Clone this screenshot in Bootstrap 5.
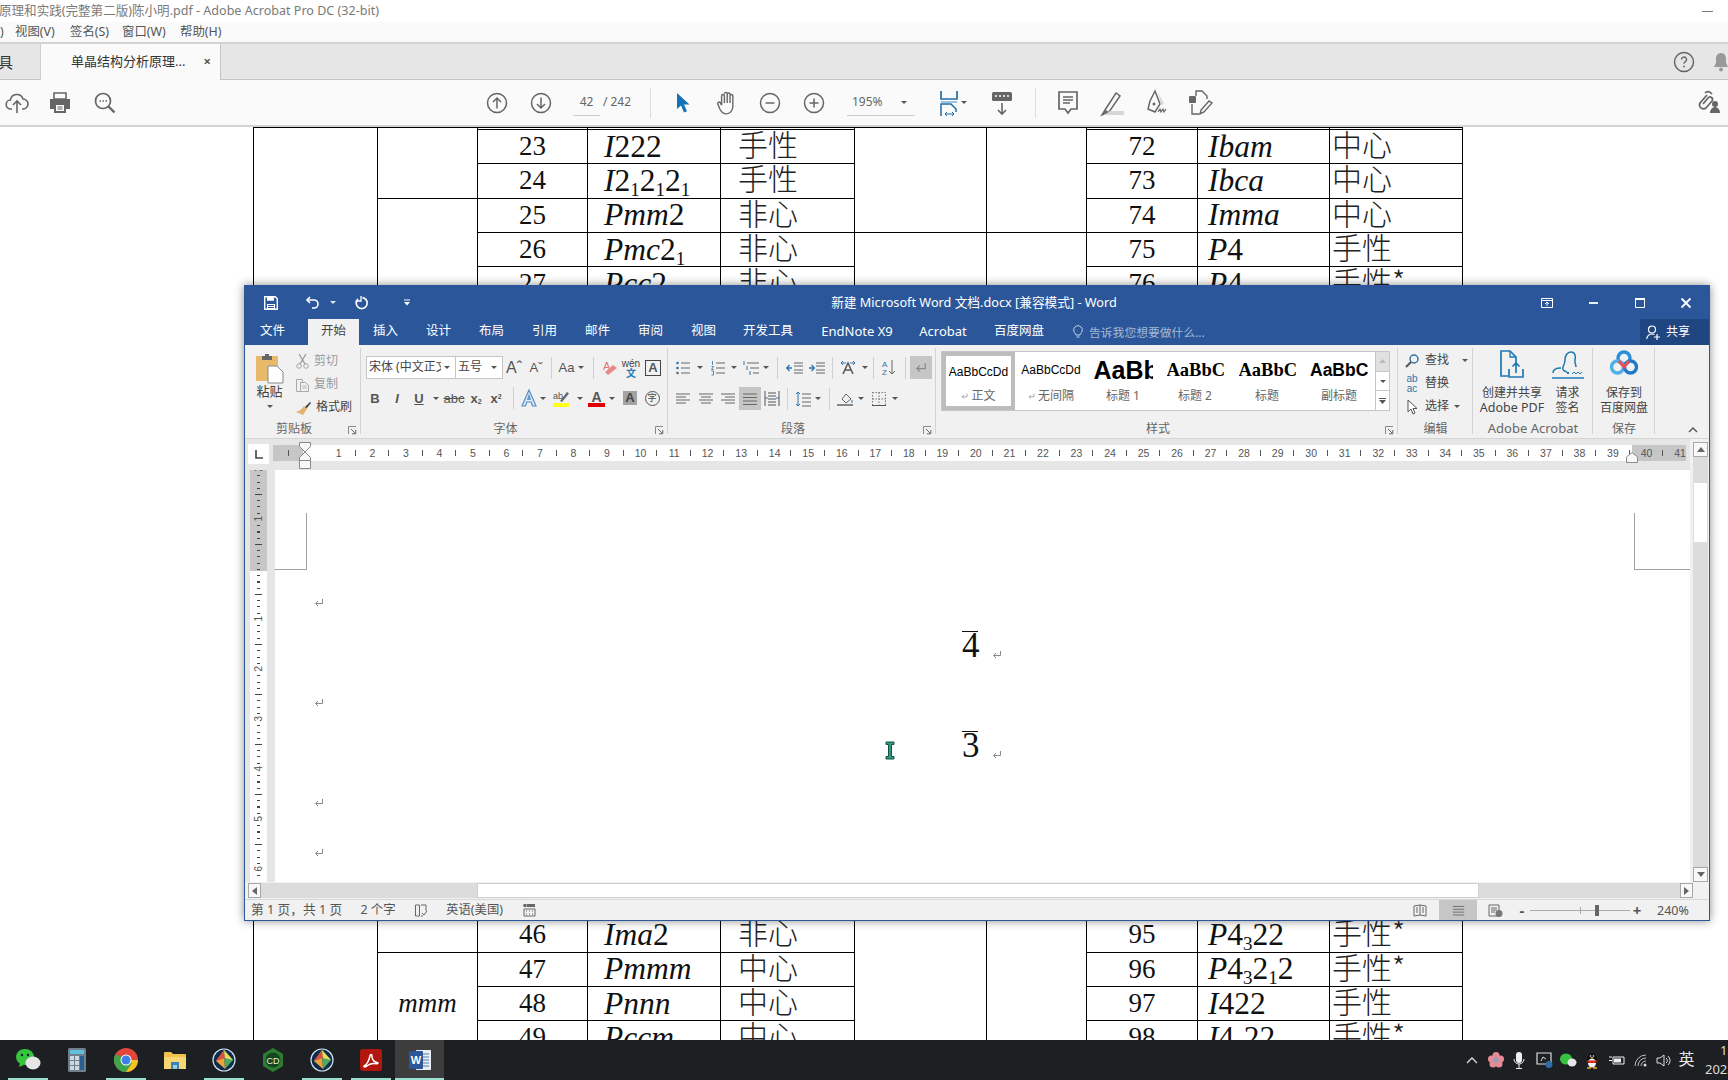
<!DOCTYPE html>
<html lang="zh-CN">
<head>
<meta charset="utf-8">
<title>Word over Acrobat</title>
<link href="https://cdn.jsdelivr.net/npm/bootstrap@5.3.0/dist/css/bootstrap.min.css" rel="stylesheet">
<style>
html,body{margin:0;height:100%}
body{width:1728px;height:1080px;overflow:hidden;position:relative;background:#fff;font-family:"Noto Sans","Noto Sans CJK SC",sans-serif;font-size:12px;color:#444;line-height:1.2}
svg{flex:none;display:block;overflow:visible}
.ui{display:grid;align-items:center;justify-items:center}
.ui>*{white-space:nowrap}
.je{justify-self:end}
.js{justify-self:start}
/* Acrobat */
.ac-title{height:22px;font-size:12.55px;color:#7a7a7a;white-space:nowrap;justify-content:space-between}
.ac-title b{font-weight:400;margin-left:-1px}
.ac-min{width:11px;height:1px;background:#777;margin-right:15px}
.ac-menu{height:22px;background:#fafafa;border-bottom:2px solid #d2d2d2;font-size:12.4px;color:#555;padding-top:1px;grid-template-columns:15px 55px 52px 58px 50px 1fr;justify-items:start}
.ac-tabs{height:36px;background:#e6e6e6;border-bottom:1px solid #c4c4c4;font-size:13px}
.ac-tab0{width:41px;height:35px;border-right:1px solid #cfcfcf;font-size:15px;color:#333;justify-content:flex-end;padding-right:27px;overflow:hidden}
.ac-tab{width:180px;height:36px;background:#fafafa;border-right:1px solid #c4c4c4;margin-bottom:-1px;padding-left:30px;justify-content:space-between;padding-right:9px;color:#333}
.ac-tab strong{font-size:13px;color:#555}
.bell{margin-right:-3px}
.ac-bar{height:47px;background:#fafafa;border-bottom:2px solid #d4d4d4;grid-template-columns:34px 51px 40px 352px 40px 48px 8px 27px 34px 32px 34px 54px 32px 56px 5px 68px 43px 12px 64px 2px 64px 24px 64px 24px 478px 36px;font-size:12px;color:#666}
.pg-in{width:27px;height:26px;border-bottom:1px solid #ccc;justify-content:center}
.zm-in{width:68px;height:26px;border-bottom:1px solid #ccc;padding:0 8px 0 5px;justify-content:space-between}
.vs{width:1px;height:30px;background:#ddd}
.doc-pdf{flex:1 1 0;overflow:hidden;background:#fff}
.pdf-tb{border-collapse:collapse;table-layout:fixed;width:1210px;margin-left:253px;color:#111;font-family:"Liberation Serif",serif}
.pdf-tb td{border:1.4px solid #000;padding:0;font-size:27px;line-height:1;white-space:nowrap;text-align:center;height:34.27px}
.pdf-tb td.sg{text-align:left;padding-left:16px;font-size:31.5px}
.pdf-tb td.sg2{text-align:left;padding-left:10px;font-size:31.5px}
.pdf-tb td.ty,.pdf-tb td.ty2{text-align:left;font-family:"Noto Sans CJK SC",sans-serif;font-weight:300;font-size:30px;line-height:27px;padding-bottom:6px;color:#222}
.pdf-tb td.ty{padding-left:17px}
.pdf-tb td.ty2{padding-left:2px}
.pdf-tb tr.r0 td{height:2px}
.pdf-tb tr.rs td{height:617px}
.pdf-tb td.an{vertical-align:middle;text-align:center;font-style:italic}
.sb{font-size:19px;vertical-align:-5px;font-style:normal;line-height:0}
.c1{width:124px}.c2{width:100px}.c3{width:110px}.c4{width:133px}.c5{width:134px}.c6{width:132px}.c7{width:100px}.c8{width:111px}.c9{width:132px}.c10{width:133px}
/* taskbar */
.task{height:40px;background:#1c2023;padding-left:3px;flex:none}
.tk{width:49px;height:40px;justify-content:center}
.tk.on{background:linear-gradient(#9be0cf,#9be0cf) center bottom/40px 2px no-repeat}
.tk.act{background:linear-gradient(#9be0cf,#9be0cf) center bottom/100% 2px no-repeat #3d3d3d}
.tray{margin-left:auto;grid-template-columns:24px 24px 22px 28px 20px 27px 23px 25px 20px 27px 28px;height:40px;color:#e6e6e6}
.tray .ime{font-size:16px}
.clk{font-size:13px;line-height:19px;justify-self:start;color:#ddd;width:70px}
.clk div:first-child{padding-left:20px}
.clk div:last-child{padding-left:5px}
/* Word */
.wd{position:absolute;left:244px;top:285px;width:1466px;height:636px;border:1px solid #2b579a;background:#f1f1f1;box-shadow:0 0 9px rgba(0,0,0,.45);display:flex;flex-direction:column;overflow:hidden}
.wd-top{height:33px;background:#2b579a;color:#fff;grid-template-columns:52px 32px 8px 48px 44px 1fr 44px 48px 46px 46px;flex:none;font-size:13px}
.cr.cr-w{border-top-color:#dfe7f2}
.wd-title{font-size:12.7px;color:#fff;padding-right:6px}
.wd-tabs{height:26px;background:#2b579a;color:#fff;flex:none;font-size:12.5px;grid-template-columns:55px 8px 51px repeat(7,53px) 76px 102px 70px 82px 1fr 69px}
.wd-tabs>div{height:26px;line-height:24px;text-align:center;width:100%}
.wd-tabs .on{background:#f1f1f1;color:#444}
.wd-tabs .la{font-size:13px}
.tellme{justify-self:start;display:flex;align-items:center;gap:6px;color:#a3b8d6;font-size:11.8px;padding-left:13px;width:auto!important}
.share{background:#1f4681;display:flex;align-items:center;justify-content:flex-start;padding-left:6px;gap:5px;font-size:12px}
.rib{height:94px;flex:none;background:#f1f1f1;border-bottom:1px solid #d5d5d5;display:flex}
.gr{position:relative;flex:none;display:flex;flex-direction:column}
.gr::after{content:"";position:absolute;right:0;top:3px;bottom:4px;width:1px;background:#d3d3d3}
.gr-body{height:75px;flex:none}
.gr-lab{text-align:center;color:#666;font-size:12px;line-height:17px}
.lb-c{padding-right:18px}
.lb-a{font-size:13px}
.dl{position:absolute;right:4px;bottom:3px}
.g-clip{width:116px}.g-font{width:307px}.g-para{width:268px}.g-sty{width:462px}.g-edit{width:75px}.g-acro{width:120px}.g-save{width:62px}
.g-end{flex:1 1 auto}
.g-end::after{display:none}
.clip-b{display:grid;grid-template-columns:49px 1fr;padding-top:8px}
.paste{display:flex;flex-direction:column;align-items:center;gap:1px;font-size:13px}
.cl-rows{display:flex;flex-direction:column;padding-left:2px;margin-top:-3px}
.cl-r{height:23px;display:flex;align-items:center;gap:5px;color:#9a9a9a}
.cl-r.act{color:#444}
.cr{display:block;width:0;height:0;border-left:3px solid transparent;border-right:3px solid transparent;border-top:3.5px solid #555}
.sp{width:1px;height:22px;background:#d0d0d0}
.rw{height:22px}
.f1{margin-top:11px;grid-template-columns:5px 90px 47px 22px 22px 9px 21px 8px 16px 18px 24px 20px}
.f2{margin-top:9px;grid-template-columns:3px 22px 22px 22px 12px 24px 20px 20px 14px 18px 10px 27px 9px 24px 8px 28px 16px}
.p1{margin-top:11px;grid-template-columns:4px 22px 12px 24px 8px 26px 4px 18px 16px 28px 4px 27px 7px 10px 22px 10px 22px}
.p2{margin-top:9px;grid-template-columns:4px 22px 24px 20px 23px 22px 8px 24px 6px 16px 16px 16px 20px 12px}
.combo{height:23px;width:100%;background:#fff;border:1px solid #c6c6c6;display:flex;align-items:center;justify-content:space-between;gap:3px;padding:0 5px 0 2px;font-size:12px;color:#444;overflow:hidden}
.combo span{flex:1 1 0;min-width:0;overflow:hidden}
.combo .cr{flex:none}
.combo+.combo{border-left:0}
.tx{font-family:"Liberation Sans",sans-serif;color:#555;font-weight:700;font-size:13px;line-height:1}
.tx sub,.tx sup{font-size:7px}
.bigA{font-size:16px;font-weight:400;color:#555}
.smA{font-size:13px}
.hi{background:#c6c6c6;width:22px;height:23px;display:flex;align-items:center;justify-content:center}
.boxA{width:16px;height:16px;border:1.4px solid #444;display:flex;align-items:center;justify-content:center;font-weight:700;color:#555;font-size:13px;font-family:"Liberation Sans",sans-serif}
.shA{width:14px;height:14px;background:#a3a3a3;display:flex;align-items:center;justify-content:center;font-weight:700;color:#444;font-size:13px;font-family:"Liberation Sans",sans-serif}
.zi{width:15px;height:15px;border-radius:50%;border:1px solid #555;display:flex;align-items:center;justify-content:center;font-size:9px;color:#444}
.wen{display:flex;flex-direction:column;align-items:center;font-size:10px;line-height:9px;color:#444;font-family:"Liberation Sans",sans-serif}
.wen span{color:#2b7ab8;font-family:"Noto Sans CJK SC",sans-serif;font-weight:700}
.gal-w{display:flex;margin:6px 0 0 5px}
.gal{display:flex;width:435px;height:60px;background:#fff;border:1px solid #c6c6c6}
.sty{width:72px;flex:none;overflow:hidden;text-align:center;display:flex;flex-direction:column;align-items:center}
.sty.sel{border:4px solid #bdbdbd;width:73px}
.sty .smp{height:36px;display:flex;align-items:center;justify-content:center;white-space:nowrap;color:#000;font-family:"Liberation Sans",sans-serif;font-size:12px;padding-top:1px}
.sty.sel .smp{height:32px}
.sty .nm{font-size:12px;color:#666;line-height:16px;display:flex;align-items:center;gap:3px;white-space:nowrap}
.sty .h1s{font-size:25px;font-weight:700;width:59px;overflow:hidden;padding-top:0;justify-content:flex-start}
.sty .h2s{font-size:18.5px;font-weight:700;font-family:"Liberation Serif",serif;width:57px;overflow:hidden;justify-content:flex-start}
.sty .h3s{font-size:17.5px;font-weight:700;width:58px;overflow:hidden;justify-content:flex-start}
.gal-s{width:14px;height:60px;display:flex;flex-direction:column;border:1px solid #c6c6c6;border-left:0;background:#fff}
.gal-s div{flex:1 1 0;display:flex;align-items:center;justify-content:center;border-bottom:1px solid #c6c6c6}
.gal-s div:first-child{background:#e0e0e0}
.gal-s div:last-child{border-bottom:0}
.ed-rows{display:flex;flex-direction:column;padding:4px 0 0 6px}
.ed-r{height:23px;display:flex;align-items:center;gap:5px;color:#444}
.ed-ic{width:16px;display:flex;justify-content:center}
.rp{font-size:10px;line-height:10px;color:#3572a8;font-weight:400;font-family:"Liberation Sans",sans-serif;text-align:center}
.acro-b{display:grid;grid-template-columns:78px 33px;padding-top:5px;justify-items:center;text-align:center;line-height:15px}
.acro-b svg,.save-b svg{margin:0 auto 6px}
.acro-b>div,.save-b{white-space:nowrap}
.save-b{padding-top:5px;text-align:center;line-height:15px}
.apdf{font-size:12.5px}
.collapse-c{position:absolute;left:33px;bottom:5px}
/* ruler + body */
.mid{flex:1 1 0;display:flex;min-height:0}
.mid-l{flex:1 1 0;display:flex;flex-direction:column;min-width:0}
.rul-r{height:31px;flex:none;background:#e6e6e6;display:flex;position:relative}
.tabsel{width:21px;height:20px;background:#fff;margin:5px 0 0 3px;flex:none;display:flex;align-items:center;justify-content:center}
.hrul{width:1413px;height:16px;margin:6px 0 0 4px;display:flex;overflow:hidden;flex:none;background:linear-gradient(to right,#c6c6c6 0 30px,#fff 30px 1359px,#c6c6c6 1359px)}
.hr0{width:49px;flex:none;background:linear-gradient(#555,#555) 15px center/1px 6px no-repeat}
.hr{width:33.54px;flex:none;text-align:center;font-family:"Liberation Sans",sans-serif;font-size:10.5px;line-height:16px;color:#555;background:linear-gradient(#555,#555) right center/1px 6px no-repeat}
.mk{position:absolute}
.mk1{left:54px;top:3px}
.mk2{left:1381px;top:13px}
.doc-r{flex:1 1 0;display:flex;min-height:0}
.vrul-w{width:30px;flex:none;background:#e6e6e6;padding-left:5px;overflow:hidden}
.vrul{width:17px;height:412px;overflow:hidden;background:linear-gradient(#c6c6c6 0 101px,#fff 101px)}
.vc{height:50px;display:flex;align-items:center;justify-content:center;background:linear-gradient(#444,#444) center top/7px 1px no-repeat,repeating-linear-gradient(#444 0 1px,transparent 1px 6.25px) center top/3px 100% no-repeat}
.vc:first-child{margin-top:-26px}
.vc span{writing-mode:vertical-rl;transform:rotate(180deg);font-family:"Liberation Sans",sans-serif;font-size:10px;line-height:10px;color:#555;background:#fff;padding:1px 0}
.vc.gy span{background:#c6c6c6}
.page{flex:1 1 0;background:#fff;position:relative;overflow:hidden}
.crop{display:flex;justify-content:space-between;margin-top:43px}
.crop div{height:57px;border-bottom:1px solid #a0a0a0}
.crop .cl{width:32px;border-right:1px solid #a0a0a0}
.crop .cr2{width:56px;border-left:1px solid #a0a0a0}
.pl{height:50px;display:flex;align-items:center;padding-left:39px}
.plfirst{margin-top:8px}
.pd{padding-left:687px;align-items:flex-start}
.dg{display:block;font-family:"Liberation Serif",serif;font-size:35px;line-height:28px;color:#111;border-top:1.6px solid #111;margin-top:3px;width:16px;text-align:center}
.pd svg{margin:22px 0 0 14px}
.ibeam{position:absolute;left:610px;top:271px}
.vsb{width:19px;flex:none;background:#f1f1f1;padding:3px 1px 0 3px;display:flex;flex-direction:column}
.sbb{height:15px;background:#f8f8f8;border:1px solid #a8a8a8;flex:none;display:flex;align-items:center;justify-content:center}
.sbt{flex:1 1 0;background:#dcdcdc;padding-top:26px}
.sbth{height:59px;background:#fff;margin:0 1px}
.hsb{height:17px;flex:none;display:flex;background:#f1f1f1;padding:1px 0}
.hsb-in{display:flex;width:1445px;margin-left:3px;background:#dcdcdc}
.hsb-b{width:13px;flex:none;background:#f8f8f8;border:1px solid #a8a8a8;display:flex;align-items:center;justify-content:center}
.hsb-th{width:1002px;height:100%;background:#fff;border:1px solid #cfcfcf;margin-left:216px;flex:none}
.stat{height:21px;flex:none;background:#f1f1f1;border-top:1px solid #d8d8d8;color:#555;font-size:12.4px;grid-template-columns:6px 92px 17px 36px 50px 57px 52px 1fr 38px 38px 37px 16px 100px 14px 65px}
.stat .pg1{font-size:12.7px}
.stat .pv{background:#c6c6c6;height:20px;width:100%;display:flex;align-items:center;justify-content:center}
.zsl{width:100px;height:1px;background:#aaa;position:relative}
.zsl::before{content:"";position:absolute;left:50px;top:-3px;width:1px;height:7px;background:#aaa}
.zsl::after{content:"";position:absolute;left:65px;top:-5px;width:4px;height:11px;background:#666}
.zb{font-weight:700;font-size:15px;line-height:1;color:#555}
.pct{font-size:12.5px;justify-self:start;color:#555;padding-left:13px}
</style>
</head>
<body>
<svg width="0" height="0" class="position-absolute">
<defs>
<symbol id="ln" viewBox="0 0 16 14"><path d="M1 2h14M1 5.500h14M1 9h14M1 12.500h14" stroke="#666" stroke-width="1.100" fill="none"/></symbol>
<symbol id="al-l" viewBox="0 0 16 14"><path d="M1 2h14M1 5h10M1 8h14M1 11h10" stroke="#666" stroke-width="1" fill="none"/></symbol>
<symbol id="al-c" viewBox="0 0 16 14"><path d="M1 2h14M3 5h10M1 8h14M3 11h10" stroke="#666" stroke-width="1" fill="none"/></symbol>
<symbol id="al-r" viewBox="0 0 16 14"><path d="M1 2h14M5 5h10M1 8h14M5 11h10" stroke="#666" stroke-width="1" fill="none"/></symbol>
<symbol id="ret" viewBox="0 0 10 10"><path d="M8.500 1v4.500H2M4 3 1.600 5.500 4 8" stroke="#888" stroke-width="1" fill="none"/></symbol>
<symbol id="dlg" viewBox="0 0 9 9"><path d="M.5 8V.5H8" stroke="#888" fill="none"/><path d="M3 3l4 4M7.800 4v3.800H4" stroke="#666" fill="none"/></symbol>
<symbol id="sph" viewBox="0 0 24 24"><circle cx="12" cy="12" r="11" fill="#0f2a4a" stroke="#cfe3f2" stroke-width="1.200"/><path d="M12 2 4 13l9 8z" fill="#e8a33a"/><path d="M12 2l9 10-8 9z" fill="#4da860"/><path d="M4 13l9-3-1-8z" fill="#d9503f"/><path d="M13 10l8 2-9-10z" fill="#e8dc5a"/></symbol>
</defs>
</svg>

<!-- Acrobat window -->
<div class="d-flex flex-column h-100">
  <div class="ac-title d-flex align-items-center"><b>原理和实践(完整第二版)陈小明.pdf - Adobe Acrobat Pro DC (32-bit)</b><i class="ac-min"></i></div>
  <div class="ac-menu ui"><span>)</span><span>视图(V)</span><span>签名(S)</span><span>窗口(W)</span><span>帮助(H)</span></div>
  <div class="ac-tabs d-flex align-items-center">
    <div class="ac-tab0 d-flex align-items-center">具</div>
    <div class="ac-tab d-flex align-items-center"><span>单晶结构分析原理...</span><strong>×</strong></div>
    <div class="ms-auto d-flex align-items-center gap-3">
      <svg width="22" height="22" viewBox="0 0 22 22"><circle cx="11" cy="11" r="9.500" fill="none" stroke="#666" stroke-width="1.500"/><path d="M8.500 8.500a2.500 2.500 0 1 1 3.600 2.300c-.8.4-1.100.9-1.100 2" fill="none" stroke="#666" stroke-width="1.400"/><circle cx="11" cy="15.500" r=".9" fill="#666"/></svg>
      <svg class="bell" width="20" height="22" viewBox="0 0 20 22"><path d="M10 2c-3.500 0-5 3-5 6v4l-2 4h14l-2-4V8c0-3-1.500-6-5-6z" fill="#999"/><circle cx="10" cy="18.500" r="2" fill="#999"/></svg>
    </div>
  </div>
  <div class="ac-bar ui">
    <svg width="24" height="24" viewBox="0 0 24 24"><path d="M7 18H6a4.500 4.500 0 0 1-.6-9A6.500 6.500 0 0 1 18 8a5 5 0 0 1 0 10h-1" fill="none" stroke="#666" stroke-width="1.600"/><path d="M12 22V10M8 14l4-4 4 4" fill="none" stroke="#666" stroke-width="1.600"/></svg>
    <svg width="22" height="22" viewBox="0 0 22 22"><path d="M5 1h12v6H5z" fill="none" stroke="#666" stroke-width="1.600"/><path d="M1 7h20v10h-4v4H5v-4H1z" fill="#666"/><path d="M7 13h8v6H7z" fill="#fafafa"/><path d="M8.500 15h5M8.500 17h5" stroke="#666"/></svg>
    <svg width="24" height="24" viewBox="0 0 24 24"><circle cx="10" cy="10" r="7.500" fill="none" stroke="#666" stroke-width="1.700"/><path d="m15.500 15.500 6 6" stroke="#666" stroke-width="2.400"/><path d="M6.500 10h1.500M9.500 10H11M12.500 10H14" stroke="#666" stroke-width="1.300"/></svg>
    <span></span>
    <svg width="22" height="22" viewBox="0 0 22 22"><circle cx="11" cy="11" r="9.500" fill="none" stroke="#666" stroke-width="1.500"/><path d="M11 16.500V6M7 10l4-4 4 4" fill="none" stroke="#666" stroke-width="1.500"/></svg>
    <svg width="22" height="22" viewBox="0 0 22 22"><circle cx="11" cy="11" r="9.500" fill="none" stroke="#666" stroke-width="1.500"/><path d="M11 5.500V16M7 12l4 4 4-4" fill="none" stroke="#666" stroke-width="1.500"/></svg>
    <span></span>
    <div class="pg-in d-flex align-items-center">42</div>
    <span>/ 242</span>
    <i class="vs"></i>
    <svg width="16" height="22" viewBox="0 0 16 22"><path d="M2 1v16l4-3.500 3 7 3-1.300-3-6.700h5.500z" fill="#1473b8"/></svg>
    <svg width="24" height="26" viewBox="0 0 22 24"><path d="M6 14V5.500a1.300 1.300 0 0 1 2.600 0V12m0-8.500a1.300 1.300 0 0 1 2.600 0V12m0-8a1.300 1.300 0 0 1 2.600 0v8m0-6.500a1.300 1.300 0 0 1 2.600 0V15c0 4-2.500 7-6 7-3 0-4.500-1.500-6-4.500L2.500 13c-.6-1.500 1.300-2.500 2.300-1.200L6 14" fill="none" stroke="#666" stroke-width="1.300"/></svg>
    <svg width="22" height="22" viewBox="0 0 22 22"><circle cx="11" cy="11" r="9.500" fill="none" stroke="#666" stroke-width="1.500"/><path d="M6.500 11h9" stroke="#666" stroke-width="1.500"/></svg>
    <svg width="22" height="22" viewBox="0 0 22 22"><circle cx="11" cy="11" r="9.500" fill="none" stroke="#666" stroke-width="1.500"/><path d="M6.500 11h9M11 6.500v9" stroke="#666" stroke-width="1.500"/></svg>
    <span></span>
    <div class="zm-in d-flex align-items-center"><span>195%</span><i class="cr"></i></div>
    <svg width="18" height="26" viewBox="0 0 18 26" class="je"><path d="M1 1v8h16V1" fill="none" stroke="#1f6fa8" stroke-width="1.700"/><path d="M1 12h16" stroke="#9cc4e0" stroke-width="2"/><path d="M1 26V14h10l5 5v3" fill="none" stroke="#1f6fa8" stroke-width="1.500"/><path d="M5 24h9M5 24l2-2M5 24l2 2M14 24l-2-2M14 24l-2 2" stroke="#1f6fa8"/></svg>
    <i class="cr cr-b"></i>
    <svg width="22" height="24" viewBox="0 0 22 24"><rect x="1" y="1" width="20" height="9" rx="1.500" fill="#666"/><path d="M4 5h2M8 5h2M12 5h2M16 5h2" stroke="#fff" stroke-width="1.500"/><path d="M11 12v11M7 19l4 4 4-4" fill="none" stroke="#666" stroke-width="1.600"/></svg>
    <i class="vs"></i>
    <svg width="20" height="24" viewBox="0 0 20 24"><path d="M1 1h18v17h-6l-3 4-3-4H1z" fill="none" stroke="#666" stroke-width="1.700"/><path d="M5 6h10M5 9h10M5 12h7" stroke="#666" stroke-width="1.300"/></svg>
    <svg width="24" height="26" viewBox="0 0 24 26"><path d="M2 25l3-5L16 3l4 3-11 16z" fill="none" stroke="#666" stroke-width="1.500"/><path d="M10 21h14v4H4z" fill="#d6d6d6"/><path d="M3 24l3-4 2.500 2z" fill="#666"/></svg>
    <svg width="24" height="26" viewBox="0 0 24 26"><path d="M11 1l5 13-5 8-7-3 2-8z" fill="none" stroke="#666" stroke-width="1.500"/><circle cx="10" cy="14" r="1.500" fill="#666"/><path d="M14 2l6 12-3 1" fill="#d9d9d9"/><path d="M14 22l2-3 1 3 2-3 1 3 2-3" fill="none" stroke="#666" stroke-width="1.200"/></svg>
    <svg width="24" height="26" viewBox="0 0 24 26"><path d="M8 6V1h6l5 5v3M4 14v10h7" fill="none" stroke="#666" stroke-width="1.400"/><rect x="1" y="6" width="7" height="7" rx="1" fill="#666"/><path d="M12 24l1-4 8-9 3 2-8 9z" fill="none" stroke="#666" stroke-width="1.400"/></svg>
    <span></span>
    <svg width="26" height="26" viewBox="0 0 26 26"><path d="M12 5l-7 8a4 4 0 0 0 6 5l6-7a2.300 2.300 0 0 0-4-3l-5 6" fill="none" stroke="#666" stroke-width="1.700"/><path d="M10 3a4 4 0 0 1 6 0l1 1" fill="none" stroke="#666" stroke-width="1.700"/><path d="M15 23c0-4 3-6 5-6s5 2 5 6z" fill="#666"/><circle cx="20" cy="14" r="3" fill="#666"/></svg>
  </div>

  <div class="doc-pdf">
    <table class="pdf-tb">
      <colgroup><col class="c1"><col class="c2"><col class="c3"><col class="c4"><col class="c5"><col class="c6"><col class="c7"><col class="c8"><col class="c9"><col class="c10"></colgroup>
      <tr class="r0"><td rowspan="11"></td><td rowspan="3"></td><td></td><td></td><td></td><td rowspan="4"></td><td rowspan="4"></td><td></td><td></td><td></td></tr>
      <tr><td>23</td><td class="sg"><i>I</i>222</td><td class="ty">手性</td><td>72</td><td class="sg2"><i>Ibam</i></td><td class="ty2">中心</td></tr>
      <tr><td>24</td><td class="sg"><i>I</i>2<span class="sb">1</span>2<span class="sb">1</span>2<span class="sb">1</span></td><td class="ty">手性</td><td>73</td><td class="sg2"><i>Ibca</i></td><td class="ty2">中心</td></tr>
      <tr><td rowspan="5"></td><td>25</td><td class="sg"><i>Pmm</i>2</td><td class="ty">非心</td><td>74</td><td class="sg2"><i>Imma</i></td><td class="ty2">中心</td></tr>
      <tr><td>26</td><td class="sg"><i>Pmc</i>2<span class="sb">1</span></td><td class="ty">非心</td><td rowspan="7"></td><td rowspan="7"></td><td>75</td><td class="sg2"><i>P</i>4</td><td class="ty2">手性</td></tr>
      <tr><td>27</td><td class="sg"><i>Pcc</i>2</td><td class="ty">非心</td><td>76</td><td class="sg2"><i>P</i>4<span class="sb">1</span></td><td class="ty2">手性*</td></tr>
      <tr class="rs"><td></td><td></td><td></td><td></td><td></td><td></td></tr>
      <tr><td>46</td><td class="sg"><i>Ima</i>2</td><td class="ty">非心</td><td>95</td><td class="sg2"><i>P</i>4<span class="sb">3</span>22</td><td class="ty2">手性*</td></tr>
      <tr><td class="an" rowspan="3">mmm</td><td>47</td><td class="sg"><i>Pmmm</i></td><td class="ty">中心</td><td>96</td><td class="sg2"><i>P</i>4<span class="sb">3</span>2<span class="sb">1</span>2</td><td class="ty2">手性*</td></tr>
      <tr><td>48</td><td class="sg"><i>Pnnn</i></td><td class="ty">中心</td><td>97</td><td class="sg2"><i>I</i>422</td><td class="ty2">手性</td></tr>
      <tr><td>49</td><td class="sg"><i>Pccm</i></td><td class="ty">中心</td><td>98</td><td class="sg2"><i>I</i>4<span class="sb">1</span>22</td><td class="ty2">手性*</td></tr>
    </table>
  </div>

  <div class="task d-flex align-items-center">
    <div class="tk on d-flex align-items-center"><svg width="26" height="24" viewBox="0 0 26 24"><ellipse cx="10" cy="9" rx="9" ry="8" fill="#37c43f"/><path d="M5 15l-1 4 5-2z" fill="#37c43f"/><ellipse cx="18" cy="15" rx="7.500" ry="6.500" fill="#e6e6e6"/><circle cx="7" cy="7" r="1.200" fill="#123"/><circle cx="13" cy="7" r="1.200" fill="#123"/></svg></div>
    <div class="tk d-flex align-items-center"><svg width="18" height="24" viewBox="0 0 18 24"><rect width="18" height="24" rx="1.500" fill="#6f7f8c"/><rect x="2" y="2" width="14" height="4" fill="#62c0df"/><path d="M2 8h4v4H2zM7 8h4v4H7zM2 13h4v4H2zM7 13h4v4H7zM2 18h4v4H2zM7 18h4v4H7z" fill="#cfd8de"/><path d="M12 8h4v14h-4z" fill="#2a5f8f"/></svg></div>
    <div class="tk on d-flex align-items-center"><svg width="24" height="24" viewBox="0 0 24 24"><circle cx="12" cy="12" r="12" fill="#e2463a"/><path d="M12 12 1.600 18A12 12 0 0 1 1.600 6z" fill="#3ba54b"/><path d="M12 24a12 12 0 0 1-10.400-6L12 12l6 3z" fill="#3ba54b"/><path d="M24 12a12 12 0 0 1-12 12l6-9-6-3z" fill="#f3c524"/><circle cx="12" cy="12" r="5.500" fill="#fff"/><circle cx="12" cy="12" r="4.500" fill="#3f7fe8"/></svg></div>
    <div class="tk d-flex align-items-center"><svg width="22" height="19" viewBox="0 0 22 19"><path d="M0 2a1 1 0 0 1 1-1h6l2 2h12a1 1 0 0 1 1 1v14H0z" fill="#f0c14b"/><path d="M0 6h22v12H0z" fill="#f7d774"/><path d="M7 11h8v7H7z" fill="#3b82b8"/><path d="M9 14h4v4H9z" fill="#9cc8e0"/></svg></div>
    <div class="tk on d-flex align-items-center"><svg width="24" height="24"><use href="#sph"/></svg></div>
    <div class="tk d-flex align-items-center"><svg width="22" height="24" viewBox="0 0 22 24"><path d="M11 0 21 6v12l-10 6L1 18V6z" fill="#2e7d32"/><circle cx="11" cy="12" r="7.500" fill="#14461c"/><text x="11" y="15.500" font-size="9" text-anchor="middle" fill="#e6f2e6" font-family="Liberation Sans">CD</text></svg></div>
    <div class="tk on d-flex align-items-center"><svg width="24" height="24"><use href="#sph"/></svg></div>
    <div class="tk on d-flex align-items-center"><svg width="22" height="22" viewBox="0 0 22 22"><rect width="22" height="22" rx="3" fill="#b3160d"/><path d="M4 17c3-1 5-6 6-10 .3-2 2-2 2 0-.5 3 2 6 5 6.500 1.500.3 1 1.500-.5 1.300-3-.5-7 .2-9 1.700-2 2-4 1.500-3.500.500z" fill="none" stroke="#fff" stroke-width="1.500"/></svg></div>
    <div class="tk act d-flex align-items-center"><svg width="22" height="22" viewBox="0 0 22 22"><rect x="7" y="1" width="15" height="20" fill="#e9eef5"/><path d="M13 5h7M13 8h7M13 11h7M13 14h7M13 17h7" stroke="#5f7fae" stroke-width="1.200"/><rect y="2" width="14" height="18" rx="1" fill="#2b579a"/><text x="7" y="15" font-size="11" font-weight="700" text-anchor="middle" fill="#fff" font-family="Liberation Sans">W</text></svg></div>
    <div class="tray ui">
      <svg width="12" height="7" viewBox="0 0 12 7"><path d="m1 6 5-5 5 5" fill="none" stroke="#ddd" stroke-width="1.300"/></svg>
      <svg width="16" height="16" viewBox="0 0 16 16"><circle cx="8" cy="3.500" r="3.500" fill="#e68a96"/><circle cx="3.500" cy="7" r="3.500" fill="#e68a96"/><circle cx="12.500" cy="7" r="3.500" fill="#e68a96"/><circle cx="5" cy="12" r="3.500" fill="#e68a96"/><circle cx="11" cy="12" r="3.500" fill="#e68a96"/><circle cx="8" cy="8" r="2.500" fill="#8aa0b8"/></svg>
      <svg width="12" height="17" viewBox="0 0 12 17"><rect x="3" width="6" height="11" rx="3" fill="#eee"/><path d="M1 7a5 5 0 0 0 10 0M6 12v4M3 16.500h6" fill="none" stroke="#eee"/></svg>
      <svg width="17" height="16" viewBox="0 0 17 16"><path d="M1 1h14v11H1z" fill="none" stroke="#ddd" stroke-width="1.200"/><path d="M5 9l2-4 3 2" fill="none" stroke="#ddd"/><circle cx="13" cy="12.500" r="3.500" fill="#2f6da8"/></svg>
      <svg width="16" height="14" viewBox="0 0 16 14"><ellipse cx="6" cy="6" rx="6" ry="5.500" fill="#37c43f"/><ellipse cx="12" cy="9.500" rx="4.500" ry="4" fill="#e6e6e6"/></svg>
      <svg width="16" height="17" viewBox="0 0 16 17"><ellipse cx="8" cy="8" rx="5.500" ry="7.500" fill="#111" stroke="#333" stroke-width=".5"/><ellipse cx="8" cy="11" rx="4" ry="4.500" fill="#f3f3f3"/><path d="M3 8.500h10l-1 2.500H4z" fill="#d42a1f"/><path d="M6.500 5h3l-1.500 1.500z" fill="#f2b01e"/><circle cx="6.500" cy="4" r=".8" fill="#fff"/><circle cx="9.500" cy="4" r=".8" fill="#fff"/><path d="M3 16h4M9 16h4" stroke="#f2b01e" stroke-width="1.500"/></svg>
      <svg width="16" height="11" viewBox="0 0 16 11"><path d="M4 2h11v7H4z" fill="none" stroke="#eee"/><path d="M5 3.500h7v4H5z" fill="#eee"/><path d="M0 2h3M0 5.500h3" stroke="#eee"/></svg>
      <svg width="14" height="13" viewBox="0 0 14 13"><path d="M1 12A11 11 0 0 1 12 1M4 12a8 8 0 0 1 8-8M7 12a5 5 0 0 1 5-5" fill="none" stroke="#bbb"/><circle cx="11" cy="11" r="1.500" fill="#ddd"/></svg>
      <svg width="15" height="13" viewBox="0 0 15 13"><path d="M1 4h3l4-3v11L4 9H1z" fill="none" stroke="#ddd"/><path d="M10 4a3 3 0 0 1 0 5M12 2a6 6 0 0 1 0 9" fill="none" stroke="#ddd"/></svg>
      <span class="ime">英</span>
      <div class="clk"><div>13:26</div><div>2023/3/6</div></div>
    </div>
  </div>
</div>

<!-- Word window -->
<div class="wd">
  <div class="wd-top ui">
    <svg width="14" height="14" viewBox="0 0 14 14"><path d="M.7.7h10.500l2.100 2.100v10.500H.7z" fill="none" stroke="#fff" stroke-width="1.400"/><path d="M3 .7h7v4H3zM3 13V8h8v5" fill="#fff"/><path d="M4 9.500h6M4 11.500h6" stroke="#2b579a"/></svg>
    <svg width="14" height="13" viewBox="0 0 14 13"><path d="M4 1 1 4l3 3" fill="none" stroke="#fff" stroke-width="1.600"/><path d="M1.500 4H8a4 4 0 0 1 0 8H6" fill="none" stroke="#fff" stroke-width="1.600"/></svg>
    <i class="cr cr-w"></i>
    <svg width="13" height="13" viewBox="0 0 13 13"><path d="M7.500 1.600A5.500 5.500 0 1 1 3 3" fill="none" stroke="#fff" stroke-width="1.700"/><path d="M6 0v5H2" fill="none" stroke="#fff" stroke-width="1.300"/></svg>
    <svg width="8" height="7" viewBox="0 0 8 7"><path d="M1 1h6" stroke="#fff"/><path d="M1 3h6L4 6.500z" fill="#fff"/></svg>
    <div class="wd-title">新建 Microsoft Word 文档.docx [兼容模式] - Word</div>
    <svg width="12" height="10" viewBox="0 0 12 10"><path d="M.5.500h11v9H.5zM.5 2.500h11" fill="none" stroke="#fff"/><path d="M6 8V4M4 6l2-2 2 2" fill="none" stroke="#fff"/></svg>
    <svg width="9" height="2" viewBox="0 0 9 2"><path d="M0 1h9" stroke="#fff" stroke-width="1.800"/></svg>
    <svg width="10" height="10" viewBox="0 0 10 10"><path d="M.5.500h9v9h-9z" fill="none" stroke="#fff"/><path d="M0 1h10" stroke="#fff" stroke-width="2"/></svg>
    <svg width="10" height="10" viewBox="0 0 10 10"><path d="m.5.500 9 9m0-9-9 9" stroke="#fff" stroke-width="1.800"/></svg>
  </div>
  <div class="wd-tabs ui">
    <div>文件</div><span></span><div class="on">开始</div><div>插入</div><div>设计</div><div>布局</div><div>引用</div><div>邮件</div><div>审阅</div><div>视图</div><div>开发工具</div><div class="la">EndNote X9</div><div class="la">Acrobat</div><div>百度网盘</div>
    <div class="tellme"><svg width="10" height="14" viewBox="0 0 10 14"><path d="M3 10C2 8 .7 7 .7 5a4.300 4.300 0 0 1 8.600 0c0 2-1.300 3-2.300 5zM3.500 12h3" fill="none" stroke="#c6d4e6"/></svg>告诉我您想要做什么...</div>
    <div class="share"><svg width="15" height="15" viewBox="0 0 15 15"><circle cx="6" cy="4.500" r="3.500" fill="none" stroke="#fff" stroke-width="1.200"/><path d="M.7 14c.5-3 2-5 5.300-5 1 0 1.700.2 2.400.6M11 9v6M8 12h6" fill="none" stroke="#fff" stroke-width="1.200"/></svg>共享</div>
  </div>

  <div class="rib">
    <div class="gr g-clip">
      <div class="gr-body clip-b">
        <div class="paste">
          <svg width="28" height="30" viewBox="0 0 28 30"><rect x="0" y="3" width="22" height="25" rx="1" fill="#e9b96a"/><path d="M6 3h10v4H6z" fill="#666"/><path d="M9 1h4v3H9z" fill="#666"/><path d="M12 13h9l6 6v11H12z" fill="#fff" stroke="#888"/></svg>
          <span>粘贴</span><i class="cr mt-1"></i>
        </div>
        <div class="cl-rows">
          <div class="cl-r"><svg width="13" height="15" viewBox="0 0 13 15"><circle cx="3" cy="12" r="2.300" fill="none" stroke="#aaa"/><circle cx="10" cy="12" r="2.300" fill="none" stroke="#aaa"/><path d="M4 10 10 0M9 10 3 0" stroke="#999" stroke-width="1.300"/></svg><span>剪切</span></div>
          <div class="cl-r"><svg width="13" height="14" viewBox="0 0 13 14"><path d="M.5 1.500h6v3h-2v9h-4zM4.500 4.500h5l3 3v6h-8z" fill="none" stroke="#aaa"/><path d="M6 8h5M6 10h5" stroke="#bbb"/></svg><span>复制</span></div>
          <div class="cl-r act"><svg width="15" height="14" viewBox="0 0 15 14"><path d="m9 6 5-5 1 1-5 6z" fill="#444"/><path d="M8 5l3 3-4 6-7-3c3-1 5-2 8-6z" fill="#e2b470"/></svg><span>格式刷</span></div>
        </div>
      </div>
      <div class="gr-lab lb-c">剪贴板</div>
      <svg class="dl" width="9" height="9"><use href="#dlg"/></svg>
    </div>

    <div class="gr g-font">
      <div class="gr-body">
        <div class="ui rw f1">
          <span></span>
          <div class="combo"><span>宋体 (中文正文</span><i class="cr"></i></div>
          <div class="combo"><span>五号</span><i class="cr"></i></div>
          <span class="tx bigA">Aˆ</span><span class="tx bigA smA">Aˇ</span><i class="sp"></i>
          <span class="tx bigA smA">Aa</span><i class="cr"></i><i class="sp"></i>
          <svg width="16" height="16" viewBox="0 0 16 16"><text x="1" y="10" font-size="11" fill="#d77" font-family="Liberation Sans">A</text><path d="m6 15-3-3 8-7 4 3z" fill="#e88a8a"/></svg>
          <div class="wen">wén<span>文</span></div>
          <div class="boxA">A</div>
        </div>
        <div class="ui rw f2">
          <span></span>
          <span class="tx">B</span><span class="tx fst-italic">I</span><span class="tx text-decoration-underline">U</span><i class="cr"></i>
          <span class="tx text-decoration-line-through fw-normal">abc</span>
          <span class="tx">x<sub>2</sub></span><span class="tx">x<sup>2</sup></span><i class="sp"></i>
          <svg width="18" height="18" viewBox="0 0 18 18"><path d="M9 1 2 17h3.500l1.300-4h4.400l1.300 4H16zM7.800 10.500 9 6.500l1.200 4z" fill="#dbe8f5" stroke="#5b8fc4" stroke-width="1.200"/></svg><i class="cr"></i>
          <svg width="17" height="17" viewBox="0 0 17 17"><path d="M0 13h16v4H0z" fill="#ffff1a"/><text x="0" y="9" font-size="9" fill="#555" font-family="Liberation Sans">ab</text><path d="m7 11 7-9 2 1.500-7 8.500z" fill="#666"/></svg><i class="cr"></i>
          <svg width="17" height="17" viewBox="0 0 17 17"><path d="M0 13h17v4H0z" fill="#e00000"/><text x="8.500" y="12" font-size="14" text-anchor="middle" fill="#555" font-weight="700" font-family="Liberation Sans">A</text></svg><i class="cr"></i>
          <div class="shA">A</div>
          <div class="zi">字</div>
        </div>
      </div>
      <div class="gr-lab lb-c">字体</div>
      <svg class="dl" width="9" height="9"><use href="#dlg"/></svg>
    </div>

    <div class="gr g-para">
      <div class="gr-body">
        <div class="ui rw p1">
          <span></span>
          <svg width="14" height="14" viewBox="0 0 14 14"><path d="M5 2h9M5 7h9M5 12h9" stroke="#666"/><circle cx="1.500" cy="2" r="1.300" fill="#3572a8"/><circle cx="1.500" cy="7" r="1.300" fill="#3572a8"/><circle cx="1.500" cy="12" r="1.300" fill="#666"/></svg><i class="cr"></i>
          <svg width="14" height="14" viewBox="0 0 14 14"><path d="M5 2h9M5 7h9M5 12h9" stroke="#666"/><path d="M1.500 0v4M.5 5.500h2l-2 3h2M.5 10h2v4h-2" fill="none" stroke="#3572a8" stroke-width=".8"/></svg><i class="cr"></i>
          <svg width="16" height="14" viewBox="0 0 16 14"><path d="M4 2h12M7 7h9M10 12h6" stroke="#666"/><path d="M1 0v4M4 5v4M7 10v4" stroke="#3572a8"/></svg><i class="cr"></i>
          <i class="sp"></i>
          <svg width="17" height="12" viewBox="0 0 17 12"><path d="M8 1h9M8 4h9M8 8h9M8 11h9" stroke="#666"/><path d="M6 6H1M3.500 3 .7 6l2.800 3" fill="none" stroke="#3572a8" stroke-width="1.300"/></svg>
          <svg width="17" height="12" viewBox="0 0 17 12"><path d="M8 1h9M8 4h9M8 8h9M8 11h9" stroke="#666"/><path d="M1 6h5M3.500 3 6.300 6 3.500 9" fill="none" stroke="#3572a8" stroke-width="1.300"/></svg>
          <i class="sp"></i>
          <svg width="16" height="15" viewBox="0 0 16 15"><path d="M3 14 8 3l5 11M5 10h6" fill="none" stroke="#555" stroke-width="1.500"/><path d="M1 3h5M3 1 1 3l2 2M15 3h-5M13 1l2 2-2 2" fill="none" stroke="#3572a8"/></svg>
          <i class="cr"></i><i class="sp"></i>
          <svg width="14" height="17" viewBox="0 0 14 17"><text x="0" y="8" font-size="8" fill="#3572a8" font-family="Liberation Sans">A</text><text x="0" y="16" font-size="8" fill="#3572a8" font-family="Liberation Sans">Z</text><path d="M10 1v14M7 12l3 3 3-3" fill="none" stroke="#666"/></svg>
          <i class="sp"></i>
          <div class="hi"><svg width="12" height="12"><use href="#ret"/></svg></div>
        </div>
        <div class="ui rw p2">
          <span></span>
          <svg width="16" height="14"><use href="#al-l"/></svg>
          <svg width="16" height="14"><use href="#al-c"/></svg>
          <svg width="16" height="14"><use href="#al-r"/></svg>
          <div class="hi"><svg width="16" height="14"><use href="#ln"/></svg></div>
          <svg width="16" height="15" viewBox="0 0 16 15"><path d="M1 0v15M15 0v15M4 2h8M4 5h8M4 8h8M4 11h8M4 14h8" stroke="#555"/><path d="M1 7h3M15 7h-3" stroke="#3572a8"/></svg>
          <i class="sp"></i>
          <svg width="16" height="16" viewBox="0 0 16 16"><path d="M7 3h9M7 7h9M7 11h9M7 15h9" stroke="#666"/><path d="M3 1v14M1 3l2-2 2 2M1 13l2 2 2-2" fill="none" stroke="#3572a8"/></svg>
          <i class="cr"></i>
          <i class="sp"></i>
          <svg width="16" height="16" viewBox="0 0 16 16"><path d="M5 8l4-5 5 5-5 4z" fill="none" stroke="#666"/><path d="M15 9v3" stroke="#3572a8"/><path d="M0 14h16" stroke="#888" stroke-width="2"/></svg>
          <i class="cr"></i>
          <svg width="14" height="14" viewBox="0 0 14 14"><path d="M.5.500h13v13H.5zM7 .5v13M.5 7h13" fill="none" stroke="#777" stroke-dasharray="1.500 1.500"/><path d="M0 13.500h14" stroke="#555"/></svg>
          <i class="cr"></i>
        </div>
      </div>
      <div class="gr-lab lb-c">段落</div>
      <svg class="dl" width="9" height="9"><use href="#dlg"/></svg>
    </div>

    <div class="gr g-sty">
      <div class="gr-body">
        <div class="gal-w">
          <div class="gal">
            <div class="sty sel"><div class="smp">AaBbCcDd</div><div class="nm"><svg width="7" height="7"><use href="#ret"/></svg>正文</div></div>
            <div class="sty"><div class="smp">AaBbCcDd</div><div class="nm"><svg width="7" height="7"><use href="#ret"/></svg>无间隔</div></div>
            <div class="sty"><div class="smp h1s">AaBb</div><div class="nm">标题 1</div></div>
            <div class="sty"><div class="smp h2s">AaBbC</div><div class="nm">标题 2</div></div>
            <div class="sty"><div class="smp h2s">AaBbC</div><div class="nm">标题</div></div>
            <div class="sty"><div class="smp h3s">AaBbC</div><div class="nm">副标题</div></div>
          </div>
          <div class="gal-s"><div><svg width="7" height="4" viewBox="0 0 7 4"><path d="M0 4h7L3.500 0z" fill="#bbb"/></svg></div><div><i class="cr"></i></div><div><svg width="7" height="6" viewBox="0 0 7 6"><path d="M0 .5h7" stroke="#555"/><path d="M0 2h7L3.500 6z" fill="#555"/></svg></div></div>
        </div>
      </div>
      <div class="gr-lab lb-c">样式</div>
      <svg class="dl" width="9" height="9"><use href="#dlg"/></svg>
    </div>

    <div class="gr g-edit">
      <div class="gr-body ed-rows">
        <div class="ed-r"><span class="ed-ic"><svg width="14" height="14" viewBox="0 0 14 14"><circle cx="9" cy="5" r="4" fill="none" stroke="#3572a8" stroke-width="1.500"/><path d="m6 8-5 5" stroke="#555" stroke-width="2"/></svg></span><span>查找</span><i class="cr ms-2"></i></div>
        <div class="ed-r"><span class="ed-ic rp">ab<br>ac</span><span>替换</span></div>
        <div class="ed-r"><span class="ed-ic"><svg width="11" height="16" viewBox="0 0 11 16"><path d="M1 1v12l3-3 2 5 2-1-2-4.500h4z" fill="#fff" stroke="#555"/></svg></span><span>选择</span><i class="cr"></i></div>
      </div>
      <div class="gr-lab">编辑</div>
    </div>

    <div class="gr g-acro">
      <div class="gr-body acro-b">
        <div><svg width="24" height="29" viewBox="0 0 24 29"><path d="M8 26H1V1h9l6 6v6" fill="none" stroke="#1f78b4" stroke-width="1.700"/><path d="M10 1v6h6" fill="none" stroke="#1f78b4" stroke-width="1.300"/><path d="M9 19v8h14v-8M16 23V13M12.500 16.500 16 13l3.500 3.500" fill="none" stroke="#1f78b4" stroke-width="1.700"/></svg>创建并共享<br><span class="apdf">Adobe PDF</span></div>
        <div><svg width="32" height="29" viewBox="0 0 32 29"><path d="M15 22c-3-1-5-2-4-5 1-2 2-4 2-7 0-4 2-8 6-8s5 4 4 8c-.5 3 1 5 1 7M1 23c0-3 3-5 8-5" fill="none" stroke="#1f78b4" stroke-width="1.500"/><path d="M0 28h32" stroke="#1f78b4" stroke-width="1.500"/><path d="M15 22l2 2m0-2-2 2M20 24l2-2 2 2 2-2 2 2 2-2" fill="none" stroke="#1f78b4"/></svg>请求<br>签名</div>
      </div>
      <div class="gr-lab lb-a">Adobe Acrobat</div>
    </div>

    <div class="gr g-save">
      <div class="gr-body save-b"><svg width="28" height="29" viewBox="0 0 28 29"><circle cx="14" cy="8" r="6" fill="none" stroke="#2b8fd9" stroke-width="3.400"/><circle cx="7.500" cy="17" r="6" fill="none" stroke="#4fb0e8" stroke-width="3.400"/><circle cx="20.500" cy="17" r="6" fill="none" stroke="#1f78c8" stroke-width="3.400"/><path d="M9 11l5 6 5-6" fill="none" stroke="#e8505b" stroke-width="3"/></svg>保存到<br>百度网盘</div>
      <div class="gr-lab">保存</div>
    </div>

    <div class="gr g-end"><svg class="collapse-c" width="10" height="6" viewBox="0 0 10 6"><path d="m1 5 4-4 4 4" fill="none" stroke="#555" stroke-width="1.400"/></svg></div>
  </div>

  <div class="mid">
    <div class="mid-l">
      <div class="rul-r">
        <div class="tabsel"><svg width="8" height="9" viewBox="0 0 8 9"><path d="M1 0v8h7" fill="none" stroke="#444" stroke-width="1.600"/></svg></div>
        <div class="hrul">
          <div class="hr0"></div>
          <div class="hr">1</div><div class="hr">2</div><div class="hr">3</div><div class="hr">4</div><div class="hr">5</div><div class="hr">6</div><div class="hr">7</div><div class="hr">8</div><div class="hr">9</div><div class="hr">10</div><div class="hr">11</div><div class="hr">12</div><div class="hr">13</div><div class="hr">14</div><div class="hr">15</div><div class="hr">16</div><div class="hr">17</div><div class="hr">18</div><div class="hr">19</div><div class="hr">20</div><div class="hr">21</div><div class="hr">22</div><div class="hr">23</div><div class="hr">24</div><div class="hr">25</div><div class="hr">26</div><div class="hr">27</div><div class="hr">28</div><div class="hr">29</div><div class="hr">30</div><div class="hr">31</div><div class="hr">32</div><div class="hr">33</div><div class="hr">34</div><div class="hr">35</div><div class="hr">36</div><div class="hr">37</div><div class="hr">38</div><div class="hr">39</div><div class="hr">40</div><div class="hr">41</div>
        </div>
        <svg class="mk mk1" width="12" height="27" viewBox="0 0 12 27"><path d="M.5.500h11v4L6 10 .5 4.500zM6 10l5.500 5.500v3H.5v-3zM.5 18.500h11v8H.5z" fill="#f8f8f8" stroke="#8a8a8a"/></svg>
        <svg class="mk mk2" width="12" height="11" viewBox="0 0 12 11"><path d="M6 .5 11.500 5v5.500H.5V5z" fill="#f8f8f8" stroke="#8a8a8a"/></svg>
      </div>
      <div class="doc-r">
        <div class="vrul-w">
          <div class="vrul">
            <div class="vc gy"><span>2</span></div><div class="vc gy"><span>1</span></div><div class="vc"></div>
            <div class="vc"><span>1</span></div><div class="vc"><span>2</span></div><div class="vc"><span>3</span></div><div class="vc"><span>4</span></div><div class="vc"><span>5</span></div><div class="vc"><span>6</span></div>
          </div>
        </div>
        <div class="page">
          <div class="crop"><div class="cl"></div><div class="cr2"></div></div>
          <div class="pl plfirst"><svg width="10" height="10"><use href="#ret"/></svg></div>
          <div class="pl pd"><span class="dg">4</span><svg width="10" height="10"><use href="#ret"/></svg></div>
          <div class="pl"><svg width="10" height="10"><use href="#ret"/></svg></div>
          <div class="pl pd"><span class="dg">3</span><svg width="10" height="10"><use href="#ret"/></svg></div>
          <div class="pl"><svg width="10" height="10"><use href="#ret"/></svg></div>
          <div class="pl"><svg width="10" height="10"><use href="#ret"/></svg></div>
          <svg class="ibeam" width="10" height="19" viewBox="0 0 10 19"><path d="M1 1h8v2.500H6.500v12H9V18H1v-2.500h2.500v-12H1z" fill="#2f9a80" stroke="#1d4f45"/></svg>
        </div>
      </div>
    </div>
    <div class="vsb">
      <div class="sbb"><svg width="8" height="5" viewBox="0 0 8 5"><path d="M0 5h8L4 0z" fill="#666"/></svg></div>
      <div class="sbt"><div class="sbth"></div></div>
      <div class="sbb"><svg width="8" height="5" viewBox="0 0 8 5"><path d="M0 0h8L4 5z" fill="#666"/></svg></div>
    </div>
  </div>

  <div class="hsb">
    <div class="hsb-in">
      <div class="hsb-b"><svg width="5" height="8" viewBox="0 0 5 8"><path d="M5 0v8L0 4z" fill="#666"/></svg></div>
      <div class="hsb-th"></div>
      <div class="hsb-b ms-auto"><svg width="5" height="8" viewBox="0 0 5 8"><path d="M0 0v8l5-4z" fill="#666"/></svg></div>
    </div>
  </div>

  <div class="stat ui">
    <span></span><span class="js pg1">第 1 页，共 1 页</span><span></span><span>2 个字</span>
    <svg width="12" height="13" viewBox="0 0 12 13"><path d="M.5 1h4v11h-4zM6 1h5v6M6 12h2" fill="none" stroke="#666"/><path d="m7 9 2 2 3-4" fill="none" stroke="#666"/></svg>
    <span>英语(美国)</span>
    <svg width="13" height="14" viewBox="0 0 13 14"><path d="M4 1h8v3H4z" fill="#666"/><circle cx="2" cy="2.500" r="1.800" fill="#666"/><path d="M1 6h11v7H1z" fill="none" stroke="#666"/><path d="M3 8h1M6 8h1M9 8h1M3 11h1M6 11h1M9 11h1" stroke="#666"/></svg>
    <span></span>
    <svg width="14" height="13" viewBox="0 0 14 13"><path d="M7 1 1 2v10l6-1 6 1V2zM7 1v10M3 4h2M3 6h2M3 8h2M9 4h2M9 6h2M9 8h2" fill="none" stroke="#666"/></svg>
    <div class="pv"><svg width="13" height="13"><use href="#ln"/></svg></div>
    <svg width="15" height="13" viewBox="0 0 15 13"><path d="M1 1h10v11H1zM3 4h6M3 6h6M3 8h4" fill="none" stroke="#666"/><circle cx="11" cy="9.500" r="3.500" fill="#777"/></svg>
    <span class="zb">-</span>
    <div class="zsl"></div>
    <span class="zb">+</span>
    <span class="pct">240%</span>
  </div>
</div>
</body>
</html>
